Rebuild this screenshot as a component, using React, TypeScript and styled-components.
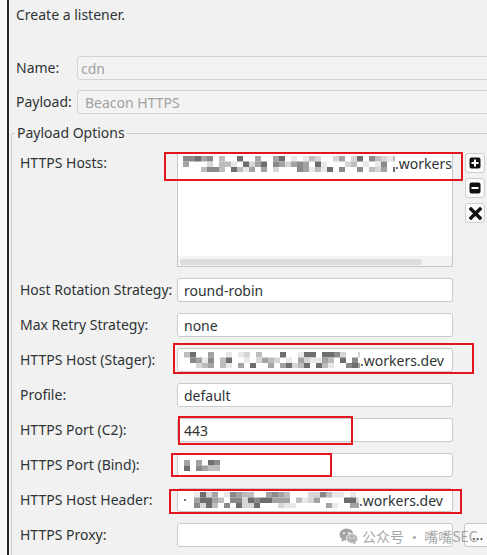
import React from "react";
import styled, { createGlobalStyle } from "styled-components";

const GlobalStyle = createGlobalStyle`
  html, body {
    margin: 0;
    padding: 0;
    background: #f8f8f8;
    overflow: hidden;
  }
  body {
    font-family: "Noto Sans", "Open Sans", "DejaVu Sans", sans-serif;
    font-size: 14px;
    color: #2e3436;
  }
`;

const Page = styled.div`
  position: relative;
  width: 487px;
  height: 555px;
  overflow: hidden;
  display: flex;
  padding-left: 7px;
  box-sizing: border-box;
`;

const Dialog = styled.div`
  flex: none;
  width: 580px;
  height: 100%;
  background: #f1f1f1;
  border-left: 2px solid #262626;
  padding: 5px 0 0 2px;
  box-sizing: border-box;
  display: flex;
  flex-direction: column;
`;

const Title = styled.div`
  padding-left: 5px;
  line-height: 20px;
  height: 20px;
  margin-bottom: 31px;
`;

const TopRow = styled.div`
  display: grid;
  grid-template-columns: 61px 1fr;
  align-items: center;
  padding-left: 5px;
  height: 24px;
  margin-bottom: 10px;
`;

const Label = styled.span`
  line-height: 24px;
  white-space: nowrap;
`;

const ReadOnlyField = styled.div<{ $inset: number }>`
  height: 24px;
  box-sizing: border-box;
  border: 1px solid #d4d4d4;
  border-radius: 3px;
  background: #f3f3f3;
  color: #a2a2a2;
  padding-left: ${(p) => p.$inset}px;
  display: flex;
  align-items: center;
`;

const Group = styled.fieldset`
  margin: -1px 0 0 0;
  border: 1px solid #cbcbcb;
  border-radius: 2px;
  padding: 9px 0 0 8px;
  min-width: 0;
  flex: 1;
`;

const GroupTitle = styled.legend`
  line-height: 20px;
  padding: 0 2px;
  margin-left: -5px;
`;

const FieldRow = styled.div<{ $tall?: boolean }>`
  position: relative;
  display: grid;
  grid-template-columns: 146px 276px auto;
  column-gap: 11px;
  align-items: start;
  height: ${(p) => (p.$tall ? "115px" : "24px")};
  margin-bottom: 11px;
`;

const TopLabel = styled.span`
  line-height: 20px;
  padding-top: 1px;
  white-space: nowrap;
`;

const ListBox = styled.div`
  height: 115px;
  box-sizing: border-box;
  border: 1px solid #c6c6c6;
  background: #fff;
  display: flex;
  flex-direction: column;
  overflow: hidden;
`;

const ListEntry = styled.div`
  padding: 1px 0 0 5px;
  line-height: 20px;
  height: 20px;
  display: flex;
  align-items: center;
  white-space: nowrap;
`;

const ScrollTrack = styled.div`
  margin-top: auto;
  height: 10px;
  background: #f3f3f3;
  padding: 3px 0 0 2px;
  box-sizing: border-box;
`;

const ScrollThumb = styled.div`
  width: 242px;
  height: 6px;
  border-radius: 3px;
  background: #dcdcdc;
`;

const ToolColumn = styled.div`
  display: flex;
  flex-direction: column;
  gap: 5px;
  padding: 1px 0 0 1px;
`;

const ToolButton = styled.div`
  width: 20px;
  height: 20px;
  box-sizing: border-box;
  border: 1px solid #cfcfcf;
  border-radius: 3px;
  background: #fafafa;
  display: grid;
  place-items: center;
`;

const TextBox = styled.div`
  height: 24px;
  box-sizing: border-box;
  border: 1px solid #cacaca;
  border-radius: 3px;
  background: #fff;
  padding-left: 6px;
  display: flex;
  align-items: center;
  white-space: nowrap;
  overflow: hidden;
`;

const BrowseButton = styled.div`
  width: 30px;
  height: 24px;
  box-sizing: border-box;
  border: 1px solid #c8c8c8;
  border-radius: 3px;
  background: #fbfbfb;
  padding-left: 7px;
  line-height: 21px;
`;

const Highlight = styled.div<{ $x: number; $y: number; $w: number; $h: number }>`
  position: absolute;
  left: ${(p) => p.$x}px;
  top: ${(p) => p.$y}px;
  width: ${(p) => p.$w}px;
  height: ${(p) => p.$h}px;
  box-sizing: border-box;
  border: 2px solid #e3161f;
  pointer-events: none;
`;

const Watermark = styled.div`
  position: absolute;
  left: 339px;
  top: 526px;
  display: flex;
  align-items: center;
  gap: 4px;
  color: rgba(150, 150, 150, 0.85);
  font-family: "Noto Sans CJK SC", "Noto Sans", sans-serif;
  font-size: 14px;
  line-height: 20px;
  white-space: nowrap;
  pointer-events: none;
`;

const Dot = styled.span`
  display: inline-block;
  width: 2px;
  height: 2px;
  background: #777;
  margin-right: 8px;
`;

/* pixelated redaction block */
const PALETTE = ["#6e6e6e", "#8a8a8a", "#a3a3a3", "#bdbdbd", "#d6d6d6", "#e8e8e8"];

function Mosaic({ width, seed, rows = 3 }: { width: number; seed: number; rows?: number }) {
  const cell = 6;
  const h = 5.5;
  const cols = Math.ceil(width / cell);
  let s = seed;
  const rnd = () => {
    s = (s * 1103515245 + 12345) % 2147483648;
    return s / 2147483648;
  };
  const rects: React.ReactNode[] = [];
  for (let r = 0; r < rows; r++) {
    for (let c = 0; c < cols; c++) {
      const v = rnd();
      if (v < 0.38) continue;
      const color = PALETTE[Math.floor(rnd() * PALETTE.length)];
      rects.push(<rect key={`${r}-${c}`} x={c * cell} y={r * h} width={cell} height={h} fill={color} />);
    }
  }
  return (
    <svg width={width} height={rows * h} style={{ flex: "none" }}>
      {rects}
    </svg>
  );
}

const PlusIcon = () => (
  <svg width="12" height="12" viewBox="0 0 12 12">
    <rect x="0.5" y="0.5" width="11" height="11" rx="2" fill="#111" />
    <rect x="5" y="2.5" width="2" height="7" fill="#fff" />
    <rect x="2.5" y="5" width="7" height="2" fill="#fff" />
  </svg>
);

const MinusIcon = () => (
  <svg width="12" height="12" viewBox="0 0 12 12">
    <rect x="0.5" y="0.5" width="11" height="11" rx="2" fill="#111" />
    <rect x="2.5" y="5" width="7" height="2" fill="#fff" />
  </svg>
);

const CloseIcon = () => (
  <svg width="13" height="13" viewBox="0 0 13 13">
    <path d="M2 2 L11 11 M11 2 L2 11" stroke="#111" strokeWidth="3.4" strokeLinecap="square" />
  </svg>
);

const WeChatIcon = () => (
  <svg width="19" height="17" viewBox="0 0 19 17">
    <ellipse cx="7.5" cy="6.5" rx="7" ry="6" fill="#a3a3a3" />
    <path d="M3 11 L2.5 14 L6 12 Z" fill="#a3a3a3" />
    <ellipse cx="13" cy="10.5" rx="5.6" ry="4.8" fill="#b3b3b3" stroke="#f1f1f1" strokeWidth="1" />
    <path d="M16 14 L17 16.5 L13.5 15 Z" fill="#b3b3b3" />
    <circle cx="5" cy="5" r="1" fill="#fff" />
    <circle cx="10" cy="5" r="1" fill="#fff" />
    <circle cx="11" cy="10" r="0.8" fill="#fff" />
    <circle cx="15" cy="10" r="0.8" fill="#fff" />
  </svg>
);

type Row = {
  label: string;
  value: React.ReactNode;
  mark?: { x: number; y: number; w: number; h: number };
  extra?: React.ReactNode;
};

const rows: Row[] = [
  { label: "Host Rotation Strategy:", value: "round-robin" },
  { label: "Max Retry Strategy:", value: "none" },
  {
    label: "HTTPS Host (Stager):",
    value: (
      <>
        <Mosaic width={176} seed={71} />
        <span>.workers.dev</span>
      </>
    ),
    mark: { x: 153, y: -5, w: 301, h: 31 },
  },
  { label: "Profile:", value: "default" },
  { label: "HTTPS Port (C2):", value: "443", mark: { x: 158, y: -2, w: 175, h: 29 } },
  {
    label: "HTTPS Port (Bind):",
    value: <Mosaic width={36} seed={9} rows={2} />,
    mark: { x: 151, y: 0, w: 161, h: 24 },
  },
  {
    label: "HTTPS Host Header:",
    value: (
      <>
        <Dot />
        <Mosaic width={165} seed={33} />
        <span>.workers.dev</span>
      </>
    ),
    mark: { x: 149, y: 1, w: 293, h: 25 },
  },
  { label: "HTTPS Proxy:", value: "", extra: <BrowseButton>...</BrowseButton> },
];

export default function App() {
  return (
    <Page>
      <GlobalStyle />
      <Dialog>
        <Title>Create a listener.</Title>
        <TopRow>
          <Label>Name:</Label>
          <ReadOnlyField $inset={3}>cdn</ReadOnlyField>
        </TopRow>
        <TopRow>
          <Label>Payload:</Label>
          <ReadOnlyField $inset={7}>Beacon HTTPS</ReadOnlyField>
        </TopRow>
        <Group>
          <GroupTitle>Payload Options</GroupTitle>
          <FieldRow $tall>
            <TopLabel>HTTPS Hosts:</TopLabel>
            <ListBox>
              <ListEntry>
                <Mosaic width={212} seed={5} />
                <span>.workers</span>
              </ListEntry>
              <ScrollTrack>
                <ScrollThumb />
              </ScrollTrack>
            </ListBox>
            <ToolColumn>
              <ToolButton>
                <PlusIcon />
              </ToolButton>
              <ToolButton>
                <MinusIcon />
              </ToolButton>
              <ToolButton>
                <CloseIcon />
              </ToolButton>
            </ToolColumn>
            <Highlight $x={144} $y={0} $w={299} $h={29} />
          </FieldRow>
          {rows.map((r) => (
            <FieldRow key={r.label}>
              <Label>{r.label}</Label>
              <TextBox>{r.value}</TextBox>
              {r.extra}
              {r.mark && <Highlight $x={r.mark.x} $y={r.mark.y} $w={r.mark.w} $h={r.mark.h} />}
            </FieldRow>
          ))}
        </Group>
      </Dialog>
      <Watermark>
        <WeChatIcon />
        <span>公众号 · 嘴嘴SEC</span>
      </Watermark>
    </Page>
  );
}
